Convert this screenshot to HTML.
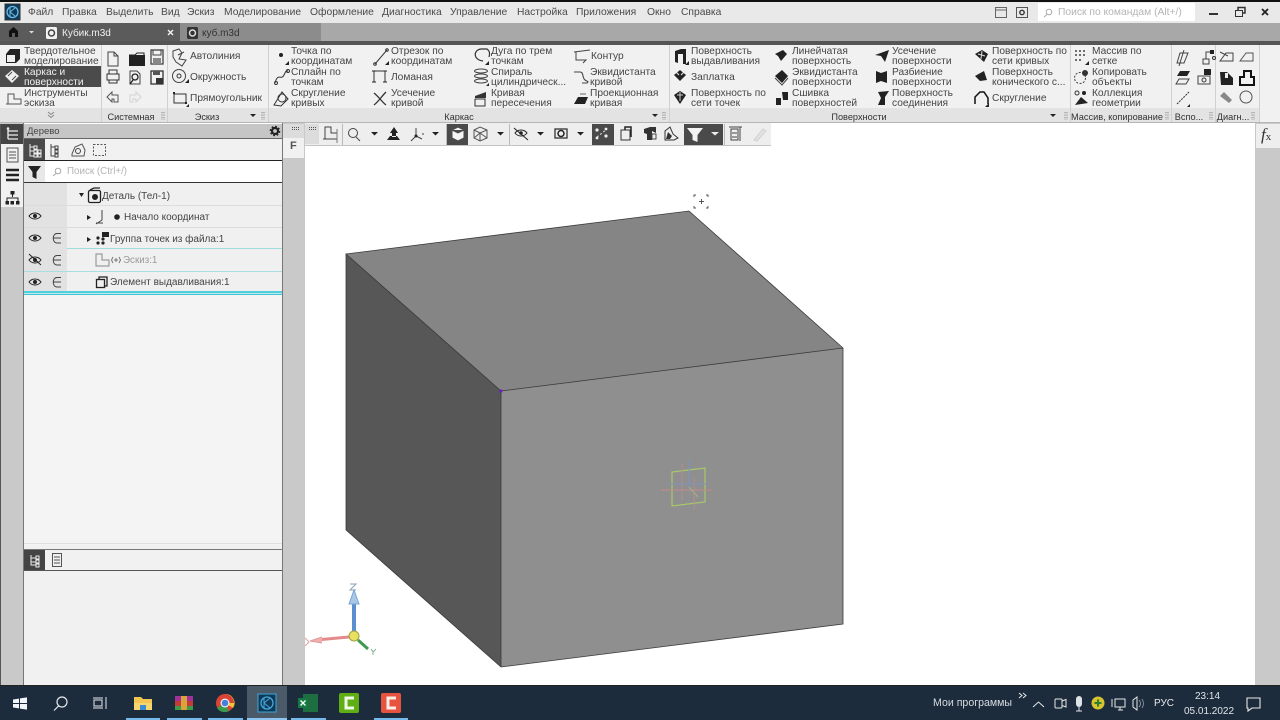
<!DOCTYPE html>
<html lang="ru"><head><meta charset="utf-8"><title>КОМПАС-3D</title>
<style>
html,body{margin:0;padding:0;width:1280px;height:720px;overflow:hidden;background:#fff}
body{position:relative;font-family:"Liberation Sans",sans-serif;font-size:10.5px;color:#3c3c3c;filter:blur(.3px)}
.b{position:absolute}
.t{position:absolute;white-space:nowrap;line-height:9.6px;font-size:10.2px;color:#454545;transform:translateY(1px)}
.m{position:absolute;top:6px;white-space:nowrap;font-size:10.3px;line-height:13px;color:#4a4a4a}
.f{position:absolute;top:112px;white-space:nowrap;font-size:9.2px;line-height:11px;color:#333;transform:translateX(-50%)}
.r{position:absolute;white-space:nowrap;font-size:10px;line-height:13px;color:#3c3c3c}
svg{position:absolute;left:0;top:0}
</style></head><body>
<!-- Base panels -->
<div class="b" style="left:0;top:0;width:1280px;height:2px;background:#111"></div>
<div class="b" style="left:0;top:2px;width:1280px;height:21px;background:#e9e9e9"></div>
<div class="b" style="left:0;top:23px;width:1280px;height:18px;background:#a8a8a8"></div>
<div class="b" style="left:0;top:23px;width:180px;height:18px;background:#5b5b5b"></div>
<div class="b" style="left:180px;top:23px;width:141px;height:18px;background:#8c8c8c"></div>
<div class="b" style="left:0;top:41px;width:1280px;height:4px;background:#555"></div>
<div class="b" style="left:0;top:45px;width:1280px;height:78px;background:#f1f1f1"></div>
<div class="b" style="left:0;top:108px;width:1260px;height:14px;background:#e3e3e3"></div>
<div class="b" style="left:0;top:122px;width:1280px;height:1px;background:#b5b5b5"></div>
<div class="b" style="left:0;top:66px;width:101px;height:21px;background:#4b4b4b"></div>
<div class="b" style="left:101px;top:45px;width:1px;height:77px;background:#d0d0d0"></div>
<div class="b" style="left:167px;top:45px;width:1px;height:77px;background:#d0d0d0"></div>
<div class="b" style="left:268px;top:45px;width:1px;height:77px;background:#d0d0d0"></div>
<div class="b" style="left:669px;top:45px;width:1px;height:77px;background:#d0d0d0"></div>
<div class="b" style="left:1070px;top:45px;width:1px;height:77px;background:#d0d0d0"></div>
<div class="b" style="left:1171px;top:45px;width:1px;height:77px;background:#d0d0d0"></div>
<div class="b" style="left:1215px;top:45px;width:1px;height:77px;background:#d0d0d0"></div>
<div class="b" style="left:1259px;top:45px;width:1px;height:77px;background:#d0d0d0"></div>
<!-- Left + middle strips -->
<div class="b" style="left:0;top:123px;width:24px;height:562px;background:#c9c9c9"></div>
<div class="b" style="left:0;top:124px;width:1px;height:561px;background:#555"></div>
<div class="b" style="left:1px;top:124px;width:23px;height:20px;background:#444"></div>
<div class="b" style="left:1px;top:144px;width:23px;height:63px;background:#f0f0f0"></div>
<div class="b" style="left:283px;top:123px;width:22px;height:562px;background:#c9c9c9"></div>
<div class="b" style="left:283px;top:124px;width:21px;height:14px;background:#dcdcdc"></div>
<div class="b" style="left:283px;top:138px;width:21px;height:20px;background:#f1f1f1"></div>
<div class="b" style="left:1255px;top:123px;width:25px;height:562px;background:#c9c9c9"></div>
<div class="b" style="left:1256px;top:124px;width:24px;height:24px;background:#eeeeee"></div>
<!-- Tree panel -->
<div class="b" style="left:24px;top:124px;width:258px;height:561px;background:#f1f1f1"></div>
<div class="b" style="left:282px;top:123px;width:1px;height:562px;background:#777"></div>
<div class="b" style="left:23px;top:123px;width:1px;height:562px;background:#777"></div>
<div class="b" style="left:24px;top:124px;width:258px;height:14px;background:#c6c6c6"></div>
<div class="b" style="left:24px;top:138px;width:258px;height:1px;background:#666"></div>
<div class="b" style="left:24px;top:139px;width:21px;height:21px;background:#4a4a4a"></div>
<div class="b" style="left:24px;top:160px;width:258px;height:1px;background:#222"></div>
<div class="b" style="left:24px;top:161px;width:21px;height:21px;background:#e8e8e8"></div>
<div class="b" style="left:45px;top:161px;width:237px;height:21px;background:#fff"></div>
<div class="b" style="left:24px;top:182px;width:258px;height:1px;background:#333"></div>
<div class="b" style="left:24px;top:183px;width:43px;height:108px;background:#e2e2e2"></div>
<div class="b" style="left:67px;top:183px;width:215px;height:108px;background:#f0f0f0"></div>
<div class="b" style="left:24px;top:205px;width:258px;height:1px;background:#dcdcdc"></div>
<div class="b" style="left:24px;top:227px;width:258px;height:1px;background:#dcdcdc"></div>
<div class="b" style="left:67px;top:248px;width:215px;height:1px;background:#9fdcdc"></div>
<div class="b" style="left:24px;top:271px;width:258px;height:1px;background:#a8dede"></div>
<div class="b" style="left:24px;top:291px;width:258px;height:2px;background:#4fd0de"></div>
<div class="b" style="left:24px;top:293px;width:258px;height:1px;background:#bfe8ec"></div>
<div class="b" style="left:24px;top:294px;width:258px;height:1px;background:#3fc6d6"></div>
<div class="b" style="left:24px;top:295px;width:258px;height:250px;background:#f4f4f4"></div>
<div class="b" style="left:24px;top:543px;width:258px;height:1px;background:#e0e0e0"></div>
<div class="b" style="left:24px;top:549px;width:258px;height:1px;background:#777"></div>
<div class="b" style="left:24px;top:550px;width:21px;height:20px;background:#444"></div>
<div class="b" style="left:24px;top:570px;width:258px;height:1px;background:#555"></div>
<!-- Viewport toolbar -->
<div class="b" style="left:305px;top:123px;width:466px;height:22px;background:#eeeeee;border-bottom:1px solid #c4c4c4"></div>
<div class="b" style="left:305px;top:124px;width:14px;height:20px;background:#dcdcdc"></div>
<div class="b" style="left:447px;top:124px;width:21px;height:21px;background:#4a4a4a"></div>
<div class="b" style="left:592px;top:124px;width:22px;height:21px;background:#4a4a4a"></div>
<div class="b" style="left:684px;top:124px;width:39px;height:21px;background:#4a4a4a"></div>
<div class="b" style="left:342px;top:124px;width:1px;height:21px;background:#bbb"></div>
<div class="b" style="left:446px;top:124px;width:1px;height:21px;background:#bbb"></div>
<div class="b" style="left:509px;top:124px;width:1px;height:21px;background:#bbb"></div>
<div class="b" style="left:724px;top:124px;width:1px;height:21px;background:#bbb"></div>
<!-- Top right search -->
<div class="b" style="left:1038px;top:3px;width:157px;height:18px;background:#fff"></div>
<!-- Taskbar -->
<div class="b" style="left:0;top:685px;width:1280px;height:1px;background:#222"></div>
<div class="b" style="left:0;top:686px;width:1280px;height:34px;background:#1c2c3c"></div>
<div class="b" style="left:247px;top:686px;width:40px;height:34px;background:#4b5a68"></div>
<div class="b" style="left:126px;top:718px;width:34px;height:2px;background:#76b9ed"></div>
<div class="b" style="left:167px;top:718px;width:35px;height:2px;background:#76b9ed"></div>
<div class="b" style="left:208px;top:718px;width:35px;height:2px;background:#76b9ed"></div>
<div class="b" style="left:247px;top:718px;width:40px;height:2px;background:#8cc6f0"></div>
<div class="b" style="left:291px;top:718px;width:35px;height:2px;background:#76b9ed"></div>
<div class="b" style="left:374px;top:718px;width:34px;height:2px;background:#76b9ed"></div>

<!-- ALL GRAPHICS -->
<svg width="1280" height="720" viewBox="0 0 1280 720" fill="none" stroke="#333" stroke-width="1">
<!-- cube -->
<polygon points="346,254 689,211 843,348 501,391" fill="#858585" stroke="none"/>
<polygon points="346,254 501,391 501,667 346,530" fill="#575757" stroke="none"/>
<polygon points="501,391 843,348 843,624 501,667" fill="#8f8f8f" stroke="none"/>
<path d="M346 254L689 211L843 348V624L501 667L346 530V254L501 391L843 348M501 391V667" stroke="#3a3a3a" stroke-width=".8"/>
<circle cx="501" cy="391" r="1.6" fill="#6a1fc0" stroke="none"/>
<!-- sketch marker on cube -->
<path d="M672 472L705 468V502L672 506Z" stroke="#a9c86a" stroke-width="1.2"/>
<path d="M661 490H712" stroke="#c48a8a" stroke-width="1"/>
<path d="M682 464V500M694 478V510" stroke="#b58c96"/>
<path d="M689 460V490M669 484H708" stroke="#7f94b8"/>
<path d="M689 487L698 497" stroke="#a9b07a"/>
<!-- cursor bracket -->
<path d="M694 197V195H696M706 195H708V197M708 206V208H706M696 208H694V206M699 201.500H704M701.500 199V204" stroke="#555"/>
<!-- triad -->
<path d="M354 632V600" stroke="#5b8fd0" stroke-width="4"/><path d="M349 604L354 590L359 604Z" fill="#a9c8e8" stroke="#7aa5d5"/>
<path d="M349 637L316 640" stroke="#e58a8a" stroke-width="3"/><path d="M322 637L310 641L322 643" fill="#f0b0b0" stroke="#e09a9a"/>
<path d="M358 640L368 649" stroke="#3f9a50" stroke-width="3"/>
<circle cx="354" cy="636" r="5" fill="#e8e060" stroke="#a0a040"/>
<path d="M305 638L309 642L305 646" stroke="#e8a0a0"/>
<path d="M350 584H356L350 590H356" stroke="#8aa0b8"/>
<path d="M371 649L373 652L376 649M373 652V655" stroke="#80b090"/>

<!-- logo -->
<rect x="5" y="4" width="15" height="16" fill="#0b3b5c"/><circle cx="12.500" cy="12" r="5.500" stroke="#6fb9e0" stroke-width="1.300"/><path d="M10 8V16M10 12L15 8M10 12L15 16" stroke="#6fb9e0"/>
<!-- home + tab icons -->
<path d="M9 37V31L13.500 27L18 31V37H15V33H12V37Z" fill="#111" stroke="none"/>
<path d="M29 31H34L31.500 33.500Z" fill="#ddd" stroke="none"/>
<rect x="46" y="27" width="11" height="12" rx="1.500" fill="#f2f2f2" stroke="none"/><circle cx="51.500" cy="33" r="3" stroke="#444" stroke-width="1.500"/>
<path d="M168 30L173 35M173 30L168 35" stroke="#f2f2f2" stroke-width="1.400"/>
<rect x="187" y="27" width="11" height="12" rx="1.500" fill="#333" stroke="none"/><circle cx="192.500" cy="33" r="3" stroke="#ddd" stroke-width="1.500"/>
<!-- top right -->
<rect x="995.500" y="7.500" width="11" height="10" fill="#e8e8e8" stroke="#666"/><path d="M996 10H1006" stroke="#666"/>
<rect x="1016.500" y="7.500" width="11" height="10" stroke="#555"/><circle cx="1022" cy="12.500" r="2.200" stroke="#333" stroke-width="1.400"/>
<circle cx="1049" cy="12" r="2.800" stroke="#aaa"/><path d="M1047 14.500L1044 17" stroke="#aaa"/>
<path d="M1209 14H1218" stroke="#333" stroke-width="2"/>
<rect x="1235.500" y="10.500" width="7" height="6" stroke="#333"/><path d="M1238 10V7.500H1245V13H1243" stroke="#333" stroke-width="1.500"/>
<path d="M1262 9L1268 15M1268 9L1262 15" stroke="#222" stroke-width="1.800"/>

<!-- left modes -->
<path d="M6 54L10 49H20V59L16 63H6Z" fill="#222" stroke="none"/><rect x="7" y="55" width="8" height="7" fill="#eee" stroke="none"/>
<path d="M12 70L19 76L12 83L5 76Z" fill="#eee" stroke="none"/><path d="M8 76L12 72M12 80L16 76" stroke="#4b4b4b"/>
<path d="M8 94V104H21V99H14V94ZM6 104H8" stroke="#555"/>
<path d="M54 112L51 114.500L48 112M54 115L51 117.500L48 115" stroke="#888"/>
<!-- system icons -->
<path d="M108 52H114L118 56V66H108Z" stroke="#444"/><path d="M114 52V56H118" stroke="#444"/>
<path d="M129 55H135L137 53H144V55" stroke="#222"/><path d="M129 55H145V66H129Z" fill="#222" stroke="none"/>
<rect x="151" y="50" width="12" height="14" stroke="#444" stroke-width="1.300"/><rect x="153" y="50" width="8" height="5" stroke="#444"/><rect x="153" y="58" width="8" height="6" fill="#888" stroke="none"/>
<rect x="107" y="74" width="12" height="6" stroke="#333"/><rect x="109" y="70" width="8" height="4" stroke="#333"/><rect x="109" y="80" width="8" height="3" stroke="#333"/>
<path d="M130 71H137L140 74V84H130Z" stroke="#444"/><circle cx="135" cy="77" r="3" stroke="#222" stroke-width="1.300"/><path d="M133 80L130 84" stroke="#222" stroke-width="1.300"/>
<rect x="151" y="71" width="12" height="13" stroke="#333" stroke-width="1.300"/><rect x="153" y="71" width="7" height="4" fill="#555" stroke="none"/><rect x="156" y="78" width="7" height="6" fill="#333" stroke="none"/>
<path d="M107 97L112 92V95H118V102H114V99H112V102Z" stroke="#555"/>
<path d="M141 97L136 92V95H130V102H133V99H136V102Z" stroke="#d4d4d4"/>
<!-- eskiz -->
<path d="M173 51L179 49L182 53L179 59L186 60L182 66L176 62L173 57ZM178 55L184 52" stroke="#444"/>
<circle cx="179" cy="76" r="6.500" stroke="#444"/><circle cx="179" cy="76" r="2" stroke="#333"/><path d="M185 83H189V79Z" fill="#222" stroke="none"/>
<rect x="174" y="94" width="12" height="9" stroke="#333"/><path d="M186 107H189V104Z" fill="#222" stroke="none"/><path d="M173 93H175M185 103H187" stroke="#222" stroke-width="2"/>
<!-- karkas col1 -->
<circle cx="281" cy="55" r="2" fill="#222" stroke="none"/><path d="M285 65H289V61Z" fill="#222" stroke="none"/>
<path d="M275 83C278 72 281 81 284 75S286 71 288 71" stroke="#333"/><circle cx="276" cy="83" r="1.500" stroke="#333"/><circle cx="288" cy="71" r="1.500" stroke="#333"/>
<path d="M274 105L282 92L288 99L281 106Z" stroke="#333"/><circle cx="282" cy="98" r="4" stroke="#333"/>
<!-- col2 -->
<path d="M375 64L387 50" stroke="#333"/><circle cx="375" cy="64" r="1.300" stroke="#333"/><circle cx="387" cy="50" r="1.300" stroke="#333"/><path d="M385 65H389V61Z" fill="#222" stroke="none"/>
<path d="M374 82V71H385V82" stroke="#333"/><path d="M372 71H376M383 71H387M372 82H376M383 82H387" stroke="#222"/>
<path d="M374 93C380 98 382 102 386 105M386 92C381 97 379 101 374 105" stroke="#333" stroke-width="1.300"/>
<!-- col3 -->
<path d="M483 61C473 60 473 50 481 49H487C490 51 490 54 489 57" stroke="#333" stroke-width="1.200"/><path d="M485 65H489V61Z" fill="#222" stroke="none"/>
<ellipse cx="481" cy="71" rx="6.500" ry="2" stroke="#444"/><ellipse cx="481" cy="76" rx="6.500" ry="2" stroke="#444"/><ellipse cx="481" cy="81" rx="6.500" ry="2" stroke="#444"/><path d="M486 86H489V83Z" fill="#222" stroke="none"/>
<path d="M475 96L486 92V98H475Z" fill="#333" stroke="none"/><rect x="475" y="99" width="10" height="7" stroke="#333"/>
<!-- col4 -->
<path d="M574 52L590 50M576 52V60H586L583 63" stroke="#444"/>
<path d="M574 72H580C584 72 582 78 585 80S589 81 587 83H582" stroke="#444" stroke-width="1.100"/>
<path d="M574 104L578 97H588L585 104Z" fill="#222" stroke="none"/><path d="M580 94H586" stroke="#666"/>
<!-- surfaces col1 -->
<path d="M675 62V51L681 49H686V64H683V54H678V63Z" fill="#222" stroke="none"/><path d="M685 65H689V61Z" fill="#222" stroke="none"/>
<path d="M680 70L686 75L680 81L674 75Z" fill="#222" stroke="none"/><path d="M675 71L679 75M685 71L681 75" stroke="#eee"/>
<path d="M674 95L680 91L686 95L680 104Z" fill="#222" stroke="none"/><path d="M677 95H683M680 92V101" stroke="#ccc"/>
<!-- col2 -->
<path d="M775 54L783 50L787 54L781 61L778 56Z" fill="#222" stroke="none"/>
<path d="M775 76L782 70L788 76L782 83Z" fill="#222" stroke="none"/><path d="M775 78L782 85L788 78" stroke="#444"/>
<rect x="776" y="98" width="5" height="7" fill="#222" stroke="none"/><path d="M782 92H788V100H783Z" fill="#222" stroke="none"/>
<!-- col3 -->
<path d="M875 55L889 50L885 62L881 56Z" fill="#222" stroke="none"/>
<path d="M876 71L881 73L887 71V83L881 81L876 83Z" fill="#222" stroke="none"/>
<path d="M878 92L889 91L885 97V105H878L881 98Z" fill="#222" stroke="none"/>
<!-- col4 -->
<path d="M975 54L982 50L988 54L984 62Z" fill="#222" stroke="none"/><path d="M978 54L985 56M982 51L981 59" stroke="#ddd"/>
<path d="M975 76L984 71L987 80L980 81Z" fill="#222" stroke="none"/>
<path d="M975 104V97L980 92H984L988 98V104" stroke="#111" stroke-width="1.500"/><path d="M985 107H989V103Z" fill="#222" stroke="none"/>
<!-- massiv -->
<g fill="#444" stroke="none"><circle cx="1076" cy="51" r="1"/><circle cx="1080" cy="51" r="1"/><circle cx="1084" cy="51" r="1"/><circle cx="1076" cy="55" r="1"/><circle cx="1080" cy="55" r="1"/><circle cx="1084" cy="55" r="1"/><circle cx="1076" cy="60" r="1"/><circle cx="1080" cy="60" r="1"/></g><path d="M1085 65H1089V61Z" fill="#222" stroke="none"/>
<circle cx="1080" cy="78" r="5.500" stroke="#444" stroke-dasharray="2 1.500"/><circle cx="1085" cy="73" r="3" fill="#333" stroke="none"/>
<circle cx="1077" cy="93" r="2" stroke="#333"/><circle cx="1084" cy="93" r="2" fill="#222" stroke="none"/><path d="M1075 105L1081 97L1088 103Z" fill="#222" stroke="none"/>
<!-- Vspo -->
<path d="M1177 63L1180 53H1188L1184 63ZM1184 50L1179 66" stroke="#444"/>
<path d="M1203 64V59H1209V64ZM1206 59V52H1214" stroke="#444"/><rect x="1210" y="50" width="4" height="4" fill="#222" stroke="none"/><circle cx="1214" cy="58" r="1.500" stroke="#333"/>
<path d="M1177 76L1180 71H1190L1187 76Z" fill="#222" stroke="none"/><path d="M1176 84L1179 79H1189L1186 84Z" stroke="#444"/>
<rect x="1198" y="76" width="12" height="8" stroke="#444"/><circle cx="1204" cy="80" r="2" stroke="#333"/><rect x="1204" y="69" width="7" height="6" fill="#222" stroke="none"/>
<path d="M1177 104L1189 92" stroke="#333" stroke-dasharray="2 1"/><path d="M1187 107H1190V104Z" fill="#222" stroke="none"/>
<!-- Diagn -->
<path d="M1220 61L1226 53H1233V61ZM1220 52L1228 56" stroke="#444"/>
<path d="M1240 61L1246 53H1253V61Z" stroke="#555"/>
<path d="M1220 72H1227L1233 78V85H1221Z" fill="#222" stroke="none"/><rect x="1225" y="73" width="3" height="5" fill="#eee" stroke="none"/>
<path d="M1244 71H1251V77H1254V85H1240V77H1244Z" stroke="#111" stroke-width="2"/>
<path d="M1220 96L1224 92L1232 100L1229 103Z" fill="#888" stroke="none"/>
<circle cx="1246" cy="97" r="6" stroke="#555"/>
<!-- ribbon dropdown + grippers -->
<path d="M250 114H256L253 117Z" fill="#222" stroke="none"/><path d="M652 114H658L655 117Z" fill="#222" stroke="none"/><path d="M1050 114H1056L1053 117Z" fill="#222" stroke="none"/>
<g stroke="#888" stroke-dasharray="1.200 1.300"><path d="M162 112V120M164 112V120M262 112V120M264 112V120M663 112V120M665 112V120M1065 112V120M1067 112V120M1166 112V120M1168 112V120M1210 112V120M1212 112V120M1252 112V120M1254 112V120"/></g>
<!-- left strip icons -->
<path d="M8 129V139M8 131H18M8 135H18M8 139H18" stroke="#eee" stroke-width="1.300"/><circle cx="8" cy="128.500" r="1.300" fill="#eee" stroke="none"/>
<rect x="7" y="148" width="11" height="14" stroke="#555"/><path d="M9 152H16M9 155H16M9 158H16" stroke="#555"/>
<path d="M6 170H19M6 175H19M6 180H19" stroke="#222" stroke-width="2.500"/>
<path d="M12.500 194V197M7 202V198H18V202" stroke="#222"/><rect x="10.500" y="191" width="4" height="3.500" fill="#222" stroke="none"/><rect x="5.500" y="201" width="3.500" height="3.500" fill="#222" stroke="none"/><rect x="10.500" y="201" width="3.500" height="3.500" fill="#222" stroke="none"/><rect x="16" y="201" width="3.500" height="3.500" fill="#222" stroke="none"/>
<!-- tree header gear -->
<circle cx="275" cy="131" r="3" stroke="#222" stroke-width="2.200"/><circle cx="275" cy="131" r="4.600" stroke="#222" stroke-dasharray="1.800 1.800" stroke-width="1.400"/>
<!-- tree toolbar -->
<path d="M30 144V156H34M30 147H34M30 151H34" stroke="#eee"/><rect x="34" y="146" width="3" height="3" stroke="#eee"/><rect x="34" y="150" width="3" height="3" stroke="#eee"/><rect x="34" y="154" width="3" height="3" stroke="#eee"/><rect x="38" y="150" width="3" height="3" stroke="#eee"/><rect x="38" y="154" width="3" height="3" stroke="#eee"/>
<path d="M51 144V156H55M51 147H55" stroke="#444"/><rect x="55" y="146" width="3" height="3" stroke="#444"/><rect x="55" y="150" width="3" height="3" stroke="#444"/><rect x="55" y="154" width="3" height="3" stroke="#444"/>
<path d="M72 154L75 147L82 144L85 150L84 156H72Z" stroke="#555"/><circle cx="78" cy="151" r="2.500" stroke="#444"/>
<rect x="93.500" y="144.500" width="12" height="11" stroke="#555" stroke-dasharray="2 1.500"/>
<!-- filter + search -->
<path d="M28 166H41L36.500 172V179L32.500 177V172Z" fill="#222" stroke="none"/>
<circle cx="58" cy="171" r="2.800" stroke="#aaa"/><path d="M56 173.500L53 176" stroke="#aaa"/>
<!-- tree icons: eyes -->
<g><path d="M29 216C32 212 38 212 41 216C38 220 32 220 29 216Z" stroke="#222"/><circle cx="35" cy="216" r="2" fill="#222" stroke="none"/>
<path d="M29 238C32 234 38 234 41 238C38 242 32 242 29 238Z" stroke="#222"/><circle cx="35" cy="238" r="2" fill="#222" stroke="none"/>
<path d="M29 260C32 256 38 256 41 260C38 264 32 264 29 260Z" stroke="#222"/><circle cx="35" cy="260" r="2" fill="#222" stroke="none"/><path d="M29 254L41 265" stroke="#222"/>
<path d="M29 282C32 278 38 278 41 282C38 286 32 286 29 282Z" stroke="#222"/><circle cx="35" cy="282" r="2" fill="#222" stroke="none"/></g>
<path d="M61 233.500H57C52 233.500 52 243 57 243H61M53 238H61" stroke="#444"/>
<path d="M61 255.500H57C52 255.500 52 265 57 265H61M53 260H61" stroke="#444"/>
<path d="M61 277.500H57C52 277.500 52 287 57 287H61M53 282H61" stroke="#444"/>
<path d="M79 193H84L81.500 197Z" fill="#222" stroke="none"/>
<path d="M87 215V220L91 217.500Z" fill="#222" stroke="none"/>
<path d="M87 237V242L91 239.500Z" fill="#222" stroke="none"/>
<rect x="88.500" y="190.500" width="12" height="12" rx="1.500" stroke="#222" stroke-width="1.300"/><circle cx="95" cy="197" r="3" fill="#222" stroke="none"/><path d="M90 190L94 188H100" stroke="#222" stroke-width="1.300"/>
<path d="M96 223H103M102 210V220L96 224" stroke="#444"/>
<circle cx="117" cy="217" r="2.800" fill="#222" stroke="none"/>
<g fill="#222" stroke="none"><rect x="102" y="232" width="7" height="5"/><circle cx="98" cy="238" r="1.600"/><circle cx="103" cy="239" r="1.600"/><circle cx="98" cy="243" r="1.600"/><circle cx="103" cy="243" r="1.600"/></g>
<path d="M96 254V266H109V260H102V254Z" stroke="#888"/>
<path d="M113 257L111.500 260L113 263M119 257L120.500 260L119 263M114 260H118M116 258V262" stroke="#777"/>
<rect x="96.500" y="279.500" width="8" height="8" stroke="#222" stroke-width="1.300"/><path d="M99 279V277H107V286H104" stroke="#222" stroke-width="1.300"/>
<!-- bottom mini toolbar -->
<path d="M31 555V565H36M31 558H36M31 562H36" stroke="#eee"/><rect x="36" y="556" width="3" height="3" stroke="#eee"/><rect x="36" y="560" width="3" height="3" stroke="#eee"/><rect x="36" y="564" width="3" height="3" stroke="#eee"/>
<rect x="52.500" y="553.500" width="9" height="13" stroke="#555"/><path d="M54 557H60M54 560H60M54 563H60" stroke="#555"/>
<!-- viewport toolbar icons -->
<g stroke="#555" stroke-dasharray="1 1"><path d="M292 127.500H300M292 129.500H300M309 127.500H317M309 129.500H317"/></g>
<path d="M325 127V139H337V133H331V127ZM323 139H325" stroke="#444"/><path d="M337 129V143" stroke="#777"/>
<circle cx="353" cy="133" r="4.500" stroke="#444"/><path d="M356 137L360 141" stroke="#444"/>
<path d="M371 132H378L374.500 135.500Z" fill="#222" stroke="none"/>
<path d="M394 127L398 133H396V137H392V133H390ZM387 140H400L397 136H390Z" fill="#222" stroke="none"/>
<path d="M416 128V136L411 141M416 136L422 139M422 134H424" stroke="#444"/><circle cx="416" cy="136" r="1.500" fill="#222" stroke="none"/>
<path d="M432 132H439L435.500 135.500Z" fill="#222" stroke="none"/>
<path d="M452 130L458 127L464 130V138L458 141L452 138ZM452 130L458 133L464 130" fill="#f4f4f4" stroke="#4a4a4a"/>
<path d="M474 130L480 127L487 130V138L480 141L474 138ZM474 130L480 133L487 130M480 133V141M474 138L480 133M487 138L480 133" stroke="#555"/>
<path d="M497 132H504L500.500 135.500Z" fill="#222" stroke="none"/>
<path d="M515 133C518 129 524 129 527 133C524 137 518 137 515 133ZM514 128L528 140" stroke="#222"/><circle cx="521" cy="133" r="1.800" fill="#222" stroke="none"/>
<path d="M537 132H544L540.500 135.500Z" fill="#222" stroke="none"/>
<rect x="555" y="129" width="12" height="9" stroke="#333" stroke-width="1.300"/><circle cx="561" cy="133.500" r="3" stroke="#222" stroke-width="1.500"/>
<path d="M577 132H584L580.500 135.500Z" fill="#222" stroke="none"/>
<path d="M597 137L607 129" stroke="#eee" stroke-dasharray="2 2"/><circle cx="597" cy="130" r="1.600" fill="#eee" stroke="none"/><circle cx="606" cy="136" r="1.600" fill="#eee" stroke="none"/><circle cx="606" cy="129" r="1.400" fill="#eee" stroke="none"/><circle cx="597" cy="138" r="1.400" fill="#eee" stroke="none"/>
<rect x="621" y="130" width="9" height="10" stroke="#333"/><path d="M625 130V127H631V137" stroke="#222" stroke-width="1.500"/>
<path d="M644 129L650 127H656V133L652 131V140H647V134L644 133Z" fill="#333" stroke="none"/><rect x="652" y="134" width="4" height="5" stroke="#444"/>
<path d="M665 140V131L670 127L673 134L678 138L674 140Z" stroke="#333"/><path d="M668 132L672 136L670 139H666Z" fill="#333" stroke="none"/>
<path d="M687 128H703L697.500 135V142L692.500 140V135Z" fill="#f2f2f2" stroke="none"/>
<path d="M711 132H719L715 135.500Z" fill="#eee" stroke="none"/>
<rect x="731" y="129" width="7" height="11" stroke="#444"/><path d="M740 127V141M729 127H742" stroke="#444"/><path d="M732 133H737M732 137H737" stroke="#444"/>
<path d="M754 140L763 129L766 131L757 141Z" stroke="#d2d2d2" fill="#e2e2e2"/>
<!-- Taskbar icons -->
<g fill="#f2f6fa" stroke="none"><path d="M13 699.500L19 698.600V703H13ZM20 698.400L27 697.400V703H20ZM13 704H19V708.400L13 707.500ZM20 704H27V709.600L20 708.600Z"/></g>
<circle cx="62" cy="702" r="5" stroke="#e6e9ee" stroke-width="1.200"/><path d="M58.500 706L54 710.500" stroke="#e6e9ee" stroke-width="1.200"/>
<path d="M93 698H103M93 708H103M94 700H102V706H94ZM106 697V709" stroke="#e6e9ee"/>
<path d="M134 697H141L143 699H152V710H134Z" fill="#f1c550" stroke="none"/><path d="M134 703H152V710H134Z" fill="#f6d670" stroke="none"/><rect x="140" y="705" width="6" height="5" fill="#3b8bd0" stroke="none"/>
<rect x="175" y="696" width="18" height="5" fill="#a3309a" stroke="none"/><rect x="175" y="701" width="18" height="5" fill="#c43a34" stroke="none"/><rect x="175" y="706" width="18" height="4" fill="#3d9a4a" stroke="none"/><rect x="181" y="696" width="6" height="14" fill="#d9a23a" stroke="none"/>
<circle cx="225" cy="703" r="9" fill="#d94436" stroke="none"/><path d="M225 703L217 708A9 9 0 0 0 229 711Z" fill="#3a9a4d" stroke="none"/><path d="M225 694A9 9 0 0 1 233 708L225 703Z" fill="#f4c331" stroke="none"/><path d="M225 694A9 9 0 0 1 234 703L225 703Z" fill="#d94436" stroke="none"/><circle cx="225" cy="703" r="4.500" fill="#f0f0f0" stroke="none"/><circle cx="225" cy="703" r="3.300" fill="#4580dd" stroke="none"/>
<rect x="258" y="694" width="18" height="18" fill="#0f3a56" stroke="#3fa4dc"/><circle cx="267" cy="703" r="6" stroke="#46a8e0" stroke-width="1.300"/><path d="M264 698V708M264 703L270 698M264 703L270 708" stroke="#46a8e0"/>
<rect x="303" y="694" width="15" height="18" fill="#1d6f42" stroke="none"/><rect x="298" y="698" width="10" height="10" fill="#147a42" stroke="none"/><path d="M300.500 700.500L305.500 705.500M305.500 700.500L300.500 705.500" stroke="#fff" stroke-width="1.300"/>
<rect x="339" y="693" width="20" height="20" rx="2" fill="#5fae14" stroke="none"/><path d="M354 698H346V708H354" stroke="#f2f8e8" stroke-width="3"/>
<rect x="381" y="693" width="20" height="20" rx="2" fill="#e8533f" stroke="none"/><path d="M396 698H388V708H396" stroke="#fbeee8" stroke-width="3"/>
<!-- tray -->
<path d="M1019 693L1022 695.500L1019 698M1023 693L1026 695.500L1023 698" stroke="#e8e8e8"/>
<path d="M1033 707L1038.500 702L1044 707" stroke="#e6e6e6"/>
<rect x="1055" y="699" width="7" height="9" rx="1" stroke="#e6e6e6"/><path d="M1062 701L1066 699.500V707L1062 705.500" stroke="#e6e6e6"/>
<rect x="1076" y="696" width="6" height="11" rx="3" fill="#dfe3e8" stroke="none"/><path d="M1079 707V711M1076 711H1082" stroke="#dfe3e8"/>
<circle cx="1098" cy="703" r="6.500" fill="#d8c42e" stroke="none"/><path d="M1098 699.500V706.500M1094.500 703H1101.500" stroke="#2d7d2d" stroke-width="2"/>
<rect x="1115" y="699" width="10" height="8" stroke="#e6e6e6"/><path d="M1112 699V707M1118 710H1123M1120 707V710" stroke="#e6e6e6"/>
<path d="M1133 700V707L1137 710V697L1133 700Z" stroke="#e6e6e6"/><path d="M1139 700C1141 702 1141 705 1139 707M1142 699C1144 702 1144 705 1142 708" stroke="#7f8a95"/>
<path d="M1247 698H1260V708H1252L1248 711V708H1247Z" stroke="#e8e8e8" stroke-width="1.100"/>
</svg>

<!-- Menu -->
<div class="m" style="left:28px">Файл</div><div class="m" style="left:62px">Правка</div><div class="m" style="left:106px">Выделить</div><div class="m" style="left:161px">Вид</div><div class="m" style="left:187px">Эскиз</div><div class="m" style="left:224px">Моделирование</div><div class="m" style="left:310px">Оформление</div><div class="m" style="left:382px">Диагностика</div><div class="m" style="left:450px">Управление</div><div class="m" style="left:517px">Настройка</div><div class="m" style="left:576px">Приложения</div><div class="m" style="left:647px">Окно</div><div class="m" style="left:681px">Справка</div>
<div class="m" style="left:1058px;color:#b4b4b4">Поиск по командам (Alt+/)</div>
<!-- Tabs -->
<div class="r" style="left:62px;top:27px;color:#f0f0f0">Кубик.m3d</div>
<div class="r" style="left:202px;top:27px;color:#333">куб.m3d</div>
<!-- Ribbon text -->
<div class="t" style="left:24px;top:46px">Твердотельное<br>моделирование</div>
<div class="t" style="left:24px;top:67px;color:#f2f2f2">Каркас и<br>поверхности</div>
<div class="t" style="left:24px;top:88px">Инструменты<br>эскиза</div>
<div class="t" style="left:190px;top:51px">Автолиния</div>
<div class="t" style="left:190px;top:72px">Окружность</div>
<div class="t" style="left:190px;top:93px">Прямоугольник</div>
<div class="t" style="left:291px;top:46px">Точка по<br>координатам</div>
<div class="t" style="left:291px;top:67px">Сплайн по<br>точкам</div>
<div class="t" style="left:291px;top:88px">Скругление<br>кривых</div>
<div class="t" style="left:391px;top:46px">Отрезок по<br>координатам</div>
<div class="t" style="left:391px;top:72px">Ломаная</div>
<div class="t" style="left:391px;top:88px">Усечение<br>кривой</div>
<div class="t" style="left:491px;top:46px">Дуга по трем<br>точкам</div>
<div class="t" style="left:491px;top:67px">Спираль<br>цилиндрическ...</div>
<div class="t" style="left:491px;top:88px">Кривая<br>пересечения</div>
<div class="t" style="left:591px;top:51px">Контур</div>
<div class="t" style="left:590px;top:67px">Эквидистанта<br>кривой</div>
<div class="t" style="left:590px;top:88px">Проекционная<br>кривая</div>
<div class="t" style="left:691px;top:46px">Поверхность<br>выдавливания</div>
<div class="t" style="left:691px;top:72px">Заплатка</div>
<div class="t" style="left:691px;top:88px">Поверхность по<br>сети точек</div>
<div class="t" style="left:792px;top:46px">Линейчатая<br>поверхность</div>
<div class="t" style="left:792px;top:67px">Эквидистанта<br>поверхности</div>
<div class="t" style="left:792px;top:88px">Сшивка<br>поверхностей</div>
<div class="t" style="left:892px;top:46px">Усечение<br>поверхности</div>
<div class="t" style="left:892px;top:67px">Разбиение<br>поверхности</div>
<div class="t" style="left:892px;top:88px">Поверхность<br>соединения</div>
<div class="t" style="left:992px;top:46px">Поверхность по<br>сети кривых</div>
<div class="t" style="left:992px;top:67px">Поверхность<br>конического с...</div>
<div class="t" style="left:992px;top:93px">Скругление</div>
<div class="t" style="left:1092px;top:46px">Массив по<br>сетке</div>
<div class="t" style="left:1092px;top:67px">Копировать<br>объекты</div>
<div class="t" style="left:1092px;top:88px">Коллекция<br>геометрии</div>
<!-- Footers -->
<div class="f" style="left:131px">Системная</div><div class="f" style="left:207px">Эскиз</div><div class="f" style="left:459px">Каркас</div><div class="f" style="left:859px">Поверхности</div><div class="f" style="left:1117px">Массив, копирование</div><div class="f" style="left:1189px">Вспо...</div><div class="f" style="left:1233px">Диагн...</div>
<!-- Tree text -->
<div class="r" style="left:27px;top:125px;font-size:9.5px;color:#444">Дерево</div>
<div class="r" style="left:67px;top:165px;color:#b4b4b4;font-size:9.8px">Поиск (Ctrl+/)</div>
<div class="r" style="left:102px;top:190px;color:#444">Деталь (Тел-1)</div>
<div class="r" style="left:124px;top:211px;color:#444">Начало координат</div>
<div class="r" style="left:110px;top:233px;color:#444">Группа точек из файла:1</div>
<div class="r" style="left:123px;top:254px;color:#9a9a9a;font-size:9.8px">Эскиз:1</div>
<div class="r" style="left:110px;top:276px;color:#444">Элемент выдавливания:1</div>
<div class="r" style="left:290px;top:140px;font-weight:bold;font-size:11px;color:#555">F</div>
<div class="b" style="left:1261px;top:124px;font-family:'Liberation Serif',serif;font-style:italic;font-size:17px;line-height:22px;color:#333">f<span style="font-size:11px;font-style:normal">x</span></div>
<!-- Tray text -->
<div class="r" style="left:933px;top:697px;color:#d7dbe0;font-size:10.6px">Мои программы</div>
<div class="r" style="left:1154px;top:697px;color:#e8e8e8;font-size:10px">РУС</div>
<div class="r" style="left:1195px;top:690px;color:#e0e4e8;font-size:10px">23:14</div>
<div class="r" style="left:1184px;top:705px;color:#e0e4e8;font-size:10px">05.01.2022</div>
</body></html>
